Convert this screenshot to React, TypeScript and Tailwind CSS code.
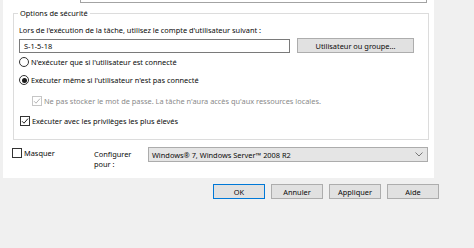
import React from 'react';

function Radio({ checked }: { checked?: boolean }) {
  return (
    <span className="flex h-[10px] w-[10px] shrink-0 items-center justify-center rounded-full border border-[#333333] bg-white">
      {checked && <span className="h-[5px] w-[5px] rounded-full bg-[#1a1a1a]" />}
    </span>
  );
}

function Check({ checked, disabled }: { checked?: boolean; disabled?: boolean }) {
  return (
    <span
      className={`flex h-[10px] w-[10px] shrink-0 items-center justify-center border bg-white ${
        disabled ? 'border-[#c6c6c6]' : 'border-[#333333]'
      }`}
    >
      {checked && (
        <svg width="8" height="8" viewBox="0 0 8 8" fill="none">
          <path d="M1 4.2 L3 6.2 L7 1.6" stroke={disabled ? '#b5b5b5' : '#222222'} strokeWidth="1" />
        </svg>
      )}
    </span>
  );
}

function DlgButton({ label, focused }: { label: string; focused?: boolean }) {
  return (
    <button
      className={`flex h-[15px] w-[52px] items-center justify-center bg-[#e1e1e1] ${
        focused ? 'border border-[#0078d7]' : 'border border-[#adadad]'
      }`}
    >
      {label}
    </button>
  );
}

export default function App() {
  return (
    <div
      className="flex h-[248px] w-[474px] flex-col overflow-hidden bg-[#f0f0f0] text-[7.4px] leading-[12px] text-[#0a0a0a]"
      style={{ fontFamily: '"Noto Sans", "Liberation Sans", sans-serif' }}
    >
      {/* white tab page */}
      <div className="ml-[3px] flex h-[178px] w-[431px] flex-col bg-white">
        {/* bottom of the field above */}
        <div className="ml-[77px] h-[3px] w-[347px] border-x border-b border-[#a3a3a3]" />

        {/* security options group */}
        <div className="relative ml-[10px] mt-[10px] h-[127px] w-[416px] border border-[#dcdcdc] px-[5px]">
          <span className="absolute -top-[7px] left-[4px] bg-white px-[2px]">Options de sécurité</span>

          <div className="mt-[10px] h-[12px] whitespace-nowrap">
            Lors de l'exécution de la tâche, utilisez le compte d'utilisateur suivant :
          </div>

          <div className="mt-[2px] flex h-[15px] items-end">
            <div className="flex h-[14px] w-[271px] items-center border border-[#7a7a7a] px-[4px]">S-1-5-18</div>
            <button className="ml-[7px] flex h-[15px] w-[117px] items-center justify-center border border-[#adadad] bg-[#e1e1e1]">
              Utilisateur ou groupe...
            </button>
          </div>

          <div className="mt-[3px] flex h-[12px] items-center gap-[2px]">
            <Radio />
            <span>N'exécuter que si l'utilisateur est connecté</span>
          </div>

          <div className="mt-[6px] flex h-[12px] items-center gap-[2px]">
            <Radio checked />
            <span>Exécuter même si l'utilisateur n'est pas connecté</span>
          </div>

          <div className="ml-[13px] mt-[9px] flex h-[12px] items-center gap-[2px] text-[#8a8a8a]">
            <Check checked disabled />
            <span>Ne pas stocker le mot de passe. La tâche n'aura accès qu'aux ressources locales.</span>
          </div>

          <div className="ml-[1px] mt-[8px] flex h-[12px] items-center gap-[2px]">
            <Check checked />
            <span>Exécuter avec les privilèges les plus élevés</span>
          </div>
        </div>

        {/* bottom row */}
        <div className="ml-[9px] mt-[7px] flex h-[26px] items-start">
          <div className="flex h-[12px] w-[82px] items-center gap-[2px]">
            <Check />
            <span>Masquer</span>
          </div>
          <div className="mt-[2px] w-[54px] leading-[10px]">
            Configurer
            <br />
            pour :
          </div>
          <div className="flex h-[15px] w-[280px] items-center justify-between border border-[#acacac] bg-[#e5e5e5] pl-[3px] pr-[4px]">
            <span>Windows® 7, Windows Server™ 2008 R2</span>
            <svg width="8" height="5" viewBox="0 0 8 5" fill="none">
              <path d="M0.5 0.5 L4 4 L7.5 0.5" stroke="#777" strokeWidth="1" />
            </svg>
          </div>
        </div>
      </div>

      {/* dialog buttons */}
      <div className="ml-[213px] mt-[6px] flex gap-[6px]">
        <DlgButton label="OK" focused />
        <DlgButton label="Annuler" />
        <DlgButton label="Appliquer" />
        <DlgButton label="Aide" />
      </div>
    </div>
  );
}
